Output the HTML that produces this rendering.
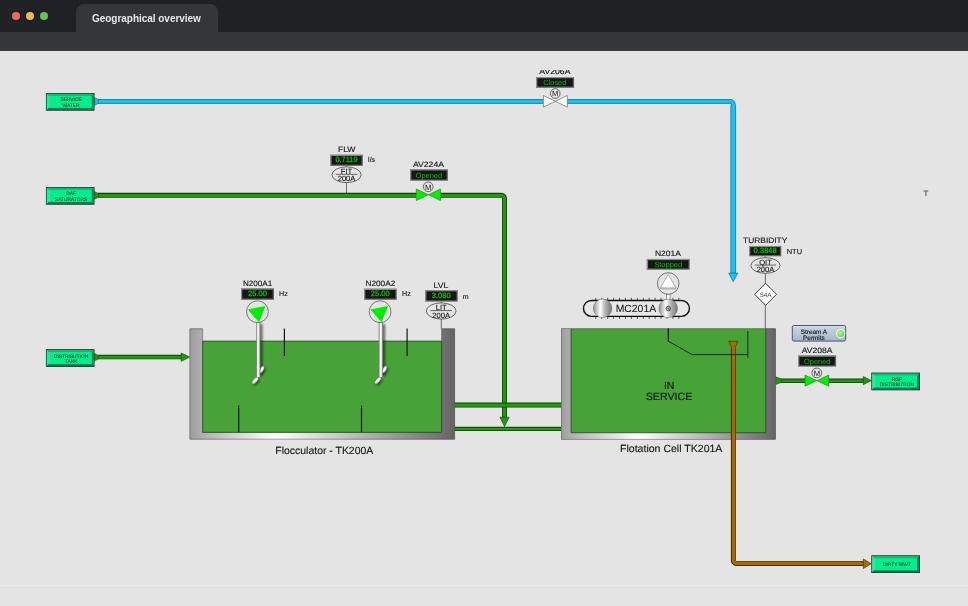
<!DOCTYPE html>
<html>
<head>
<meta charset="utf-8">
<title>Geographical overview</title>
<style>
html,body{margin:0;padding:0;}
body{width:968px;height:606px;overflow:hidden;background:#e4e4e4;font-family:"Liberation Sans",sans-serif;position:relative;}
#titlebar{position:absolute;left:0;top:0;width:968px;height:32px;background:#202124;}
#tab span{will-change:transform;transform:translateZ(0);}
#toolbar{position:absolute;left:0;top:32px;width:968px;height:19px;background:#35363a;}
.dot{position:absolute;top:12px;width:8px;height:8px;border-radius:50%;}
#tab{position:absolute;left:76px;top:4px;width:142px;height:28px;background:#35363a;border-radius:8px 8px 0 0;color:#e6e7e8;font-size:10px;font-weight:bold;line-height:29px;letter-spacing:-0.03px;}
#tab span{position:absolute;left:16px;top:0;}
#stage{position:absolute;left:0;top:70px;width:968px;height:536px;overflow:hidden;will-change:transform;transform:translateZ(0);}
#stage svg{position:absolute;left:0;top:-70px;}
#sep{position:absolute;left:0;top:584.5px;width:968px;height:1px;background:#ecebe6;}
svg text{font-family:"Liberation Sans",sans-serif;text-rendering:geometricPrecision;}
</style>
</head>
<body>
<div id="titlebar">
  <div class="dot" style="left:12px;background:#ed6a5e;"></div>
  <div class="dot" style="left:26px;background:#e5bf4a;"></div>
  <div class="dot" style="left:40px;background:#61c454;"></div>
  <div id="tab"><span>Geographical overview</span></div>
</div>
<div id="toolbar"></div>
<div id="sep"></div>
<div id="stage">
<svg width="968" height="606" viewBox="0 0 968 606">
<defs>
  <linearGradient id="gBot" x1="0" x2="1" y1="0" y2="0">
    <stop offset="0" stop-color="#9e9e9e"/><stop offset="0.05" stop-color="#b0b0b0"/><stop offset="0.32" stop-color="#ffffff"/><stop offset="0.95" stop-color="#727272"/><stop offset="1" stop-color="#646464"/>
  </linearGradient>
  <linearGradient id="gBot2" x1="0" x2="1" y1="0" y2="0">
    <stop offset="0" stop-color="#9e9e9e"/><stop offset="0.05" stop-color="#b0b0b0"/><stop offset="0.36" stop-color="#ffffff"/><stop offset="0.95" stop-color="#727272"/><stop offset="1" stop-color="#646464"/>
  </linearGradient>
  <linearGradient id="gWallL" x1="0" x2="1" y1="0" y2="0">
    <stop offset="0" stop-color="#adadad"/><stop offset="1" stop-color="#a6a6a6"/>
  </linearGradient>
  <linearGradient id="gWallR" x1="0" x2="1" y1="0" y2="0">
    <stop offset="0" stop-color="#727272"/><stop offset="1" stop-color="#656565"/>
  </linearGradient>
  <linearGradient id="gRoll" x1="0" x2="1" y1="0" y2="0">
    <stop offset="0" stop-color="#8e8e8e"/><stop offset="0.12" stop-color="#b4b4b4"/><stop offset="0.38" stop-color="#ffffff"/><stop offset="0.62" stop-color="#b8b8b8"/><stop offset="0.88" stop-color="#8a8a8a"/><stop offset="1" stop-color="#7a7a7a"/>
  </linearGradient>
  <linearGradient id="gShaft" x1="0" x2="1" y1="0" y2="0">
    <stop offset="0" stop-color="#9a9a9a"/><stop offset="0.4" stop-color="#ffffff"/><stop offset="0.65" stop-color="#ececec"/><stop offset="1" stop-color="#8a8a8a"/>
  </linearGradient>
  <linearGradient id="gBlade" x1="0" x2="1" y1="0" y2="1">
    <stop offset="0" stop-color="#ffffff"/><stop offset="0.55" stop-color="#f4f4f4"/><stop offset="1" stop-color="#9a9a9a"/>
  </linearGradient>
  <linearGradient id="gBtn" x1="0" x2="0" y1="0" y2="1">
    <stop offset="0" stop-color="#ccd6e4"/><stop offset="1" stop-color="#a6b6cc"/>
  </linearGradient>
  <radialGradient id="gLed" cx="0.4" cy="0.35" r="0.7">
    <stop offset="0" stop-color="#b4f7a0"/><stop offset="1" stop-color="#4fd63c"/>
  </radialGradient>
  <filter id="shadow" x="-50%" y="-10%" width="250%" height="130%"><feGaussianBlur stdDeviation="0.9"/></filter>
  <g id="term">
    <rect x="0" y="0" width="48.6" height="17.7" fill="#0c3020"/>
    <rect x="0.8" y="0.8" width="47" height="16.1" fill="#12a868"/>
    <path d="M0.8 0.8 H47.8 L45.8 2.8 H2.8 Z" fill="#22b07a"/>
    <path d="M0.8 0.8 V16.9 L2.8 14.9 V2.8 Z" fill="#48d8a0"/>
    <path d="M47.8 0.8 V16.9 L45.8 14.9 V2.8 Z" fill="#10885a"/>
    <path d="M0.8 16.9 H47.8 L45.8 14.9 H2.8 Z" fill="#0c7c52"/>
    <rect x="2.8" y="2.8" width="43" height="12.1" fill="#00ee8c"/>
    <path d="M3.1 2.8 V14.9" stroke="#5ff0b4" stroke-width="0.6"/>
  </g>
</defs>
<g fill="none" stroke-linejoin="round">
<path d="M98 101.45 H730.2 A3 3 0 0 1 733.2 104.45 V274" stroke="#4e3e3c" stroke-width="4.8"/>
<path d="M98 101.45 H730.2 A3 3 0 0 1 733.2 104.45 V274" stroke="#06c8fe" stroke-width="3.7" transform="translate(0,0)"/>
</g>
<g fill="none" stroke-linejoin="round">
<path d="M733.35 106 V274" stroke="#4e3e3c" stroke-width="5.4"/>
<path d="M733.35 106 V274" stroke="#06c8fe" stroke-width="4.4" transform="translate(0,0)"/>
</g>
<path d="M94.6 97.7 L98.4 99.5 L98.4 103.4 L94.6 105.2 Z" fill="#06c8fe" stroke="#4e3e3c" stroke-width="0.5"/>
<path d="M728.7 273.1 H737.8 L733.25 281.8 Z" fill="#06c8fe" stroke="#2a3c46" stroke-width="0.5"/>
<g fill="none" stroke-linejoin="round">
<path d="M98 195.3 H501.5 A3 3 0 0 1 504.5 198.3 V419" stroke="#123f0a" stroke-width="4.9"/>
<path d="M98 195.3 H501.5 A3 3 0 0 1 504.5 198.3 V419" stroke="#22980f" stroke-width="3.2" transform="translate(0,0.2)"/>
</g>
<path d="M94.6 191.6 L98.4 193.5 L98.4 197.3 L94.6 199.2 Z" fill="#22980f" stroke="#123f0a" stroke-width="0.5"/>
<g fill="none" stroke-linejoin="round">
<path d="M98 357.1 H182" stroke="#123f0a" stroke-width="4.5"/>
<path d="M98 357.1 H182" stroke="#22980f" stroke-width="2.9" transform="translate(0,0.15)"/>
</g>
<path d="M94.6 353.4 L98.4 355.3 L98.4 358.9 L94.6 360.8 Z" fill="#22980f" stroke="#123f0a" stroke-width="0.5"/>
<path d="M181.2 352.9 L189.8 357.1 L181.2 361.3 Z" fill="#22980f" stroke="#123f0a" stroke-width="0.6"/>
<g fill="none" stroke-linejoin="round">
<path d="M454.5 404.9 H561.3" stroke="#123f0a" stroke-width="5.0"/>
<path d="M454.5 404.9 H561.3" stroke="#22980f" stroke-width="3.1" transform="translate(0,0.2)"/>
</g>
<g fill="none" stroke-linejoin="round">
<path d="M454.5 428.9 H561.3" stroke="#123f0a" stroke-width="4.3"/>
<path d="M454.5 428.9 H561.3" stroke="#22980f" stroke-width="2.6" transform="translate(0,0.15)"/>
</g>
<path d="M499.9 417.2 H509.2 L504.55 426.6 Z" fill="#22980f" stroke="#123f0a" stroke-width="0.6"/>
<g fill="none" stroke-linejoin="round">
<path d="M780 380.7 H864" stroke="#123f0a" stroke-width="4.4"/>
<path d="M780 380.7 H864" stroke="#22980f" stroke-width="2.8" transform="translate(0,0.15)"/>
</g>
<path d="M775.7 376.8 L781.5 379 L781.5 382.4 L775.7 384.6 Z" fill="#22980f" stroke="#123f0a" stroke-width="0.5"/>
<path d="M863.3 376.5 L871.3 380.6 L863.3 384.7 Z" fill="#22980f" stroke="#123f0a" stroke-width="0.6"/>
<rect x="202.6" y="341.2" width="239" height="91.3" fill="#47a338"/>
<path d="M189.7 328.6 H202.6 V432.5 H441.6 V328.6 H454.8 V439.5 H189.7 Z" fill="url(#gBot)"/>
<path d="M189.9 328.8 H202.6 V341.2 H441.6 V328.8 H454.6 V439.2 H189.9 Z" fill="none" stroke="#4a4a4a" stroke-width="0.5"/>
<path d="M202.6 341.2 V432.4 H441.6 V341.2" fill="none" stroke="#1c3a16" stroke-width="0.8"/>
<path d="M202.6 341.2 H441.6" stroke="#1f4a1a" stroke-width="0.7"/>
<g stroke="#161616" stroke-width="1.2">
  <path d="M284.4 328.6 V355.9"/><path d="M407.1 328.6 V355.9"/>
  <path d="M238.7 405.6 V432.2"/><path d="M361.5 405.6 V432.2"/>
</g>
<text x="324.30" y="453.60" font-size="10.4" text-anchor="middle" fill="#151515" textLength="97.9" lengthAdjust="spacingAndGlyphs" stroke="#151515" stroke-width="0.12">Flocculator - TK200A</text>
<g id="mixer1">
  <rect x="259.4" y="324" width="3" height="52.5" fill="#111" opacity="0.62" filter="url(#shadow)"/>
  <ellipse cx="263.2" cy="370.8" rx="1.8" ry="3.7" transform="rotate(25 263.2 370.8)" fill="#111" opacity="0.6" filter="url(#shadow)"/>
  <ellipse cx="256.5" cy="381.8" rx="1.9" ry="4.1" transform="rotate(40 256.5 381.8)" fill="#111" opacity="0.6" filter="url(#shadow)"/>
  <ellipse cx="261.9" cy="369.6" rx="1.7" ry="3.7" transform="rotate(25 261.9 369.6)" fill="url(#gBlade)" stroke="#777" stroke-width="0.3"/>
  <rect x="256.3" y="322.6" width="3.8" height="54.8" fill="url(#gShaft)" stroke="#6a6a6a" stroke-width="0.4"/>
  <ellipse cx="255.2" cy="380.6" rx="1.8" ry="4.1" transform="rotate(40 255.2 380.6)" fill="url(#gBlade)" stroke="#777" stroke-width="0.3"/>
  <circle cx="257.45" cy="311.7" r="10.9" fill="none" stroke="#4a4a4a" stroke-width="0.7"/>
  <path d="M247.8 309.5 L265.5 305.9 L258.9 322.2 Z" fill="#00ee00"/>
</g>
<use href="#mixer1" x="122.65" y="0"/>
<rect x="571.1" y="328.6" width="194.7" height="104.1" fill="#47a338"/>
<path d="M561.2 328.6 H571.1 V432.7 H765.8 V328.6 H775.7 V439.5 H561.2 Z" fill="url(#gBot2)"/>
<rect x="561.4" y="328.8" width="214.1" height="110.4" fill="none" stroke="#4a4a4a" stroke-width="0.5"/>
<path d="M571.1 328.8 V432.7 H765.8 V328.8" fill="none" stroke="#1c3a16" stroke-width="0.8"/>

<text x="669.20" y="389.00" font-size="10.5" text-anchor="middle" fill="#0a1c08" stroke="#0a1c08" stroke-width="0.15">IN</text>
<text x="669.00" y="399.80" font-size="10.5" text-anchor="middle" fill="#0a1c08" textLength="46.6" lengthAdjust="spacingAndGlyphs" stroke="#0a1c08" stroke-width="0.15">SERVICE</text>
<text x="671.20" y="451.90" font-size="10.4" text-anchor="middle" fill="#151515" textLength="102.4" lengthAdjust="spacingAndGlyphs" stroke="#151515" stroke-width="0.12">Flotation Cell TK201A</text>
<g fill="none" stroke-linejoin="round">
<path d="M733.4 346 V560.4 A3 3 0 0 0 736.4 563.4 H864" stroke="#3e2800" stroke-width="5.0"/>
<path d="M733.4 346 V560.4 A3 3 0 0 0 736.4 563.4 H864" stroke="#a46b04" stroke-width="3.5" transform="translate(0.15,-0.15)"/>
</g>
<path d="M728.5 341.3 H737.9 L735.3 346.2 V348 H731.6 V346.2 Z" fill="#a46b04"/><path d="M731.3 346.6 L728.5 341.3 H737.9 L735.6 346.6" fill="none" stroke="#3e2800" stroke-width="0.6"/>
<path d="M668.3 341.2 L692.1 354.6 H747.9 M747.9 331 V357.8" fill="none" stroke="#101010" stroke-width="0.8"/><path d="M668.3 328.6 V341.5" stroke="#101010" stroke-width="1.2"/>
<path d="M863.3 558.9 L871.2 563.7 L863.3 568.6 Z" fill="#a46b04" stroke="#3e2800" stroke-width="0.6"/>
<use href="#term" x="45.9" y="93"/>
<use href="#term" x="45.9" y="187"/>
<use href="#term" x="45.9" y="349.2"/>
<use href="#term" x="871.3" y="372.6"/>
<use href="#term" x="871.3" y="555.3"/>
<g font-size="4.85" text-anchor="middle" fill="#08502e" stroke="#08502e" stroke-width="0.12">
  <text x="71.1" y="101.4">SERVICE</text><text x="71.1" y="106.7">WATER</text>
  <text x="71.1" y="195.4">DAF</text><text x="71.1" y="200.7">SATURATORS</text>
  <text x="71.1" y="357.6">DISTRIBUTION</text><text x="71.1" y="362.9">TANK</text>
  <text x="896.9" y="380.7">RGF</text><text x="896.9" y="386.4">DISTRIBUTION</text>
  <text x="896.9" y="566.1">DIRTY WWT</text>
</g>
<rect x="543.4" y="98" width="23.9" height="7" fill="#e4e4e4"/>
<text x="554.90" y="73.90" font-size="7.8" text-anchor="middle" fill="#151515" textLength="31.1" lengthAdjust="spacingAndGlyphs" stroke="#151515" stroke-width="0.12">AV206A</text>
<g>
<rect x="536.10" y="77.00" width="38.00" height="10.80" fill="#626262"/>
<path d="M536.10 87.80 V77.00 H574.10 L572.80 78.30 H537.40 V86.50 Z" fill="#8c8c8c"/>
<rect x="537.40" y="78.30" width="35.40" height="8.20" fill="#161616"/>
<text x="554.80" y="84.90" font-size="7.6" text-anchor="middle" fill="#00c000" textLength="23.1" lengthAdjust="spacingAndGlyphs">Closed</text>
</g>
<circle cx="555.20" cy="93.50" r="4.85" fill="#e4e4e4" stroke="#333" stroke-width="0.7"/>
<text x="555.20" y="96.20" font-size="7.6" text-anchor="middle" fill="#151515">M</text>
<path d="M543.40 95.50 L555.35 101.30 L543.40 107.10 Z M567.30 95.50 L555.35 101.30 L567.30 107.10 Z" fill="#ffffff" stroke="#555" stroke-width="0.6" stroke-linejoin="miter"/>
<rect x="416.4" y="192" width="24" height="7" fill="#e4e4e4"/>
<text x="428.45" y="166.60" font-size="7.8" text-anchor="middle" fill="#151515" textLength="31.1" lengthAdjust="spacingAndGlyphs" stroke="#151515" stroke-width="0.12">AV224A</text>
<g>
<rect x="410.10" y="169.30" width="37.80" height="11.40" fill="#626262"/>
<path d="M410.10 180.70 V169.30 H447.90 L446.60 170.60 H411.40 V179.40 Z" fill="#8c8c8c"/>
<rect x="411.40" y="170.60" width="35.20" height="8.80" fill="#161616"/>
<text x="428.90" y="177.50" font-size="7.5" text-anchor="middle" fill="#00c000" textLength="26.4" lengthAdjust="spacingAndGlyphs">Opened</text>
</g>
<circle cx="428.20" cy="186.80" r="4.85" fill="#e4e4e4" stroke="#333" stroke-width="0.7"/>
<text x="428.20" y="189.50" font-size="7.6" text-anchor="middle" fill="#151515">M</text>
<path d="M416.30 189.00 L428.40 194.80 L416.30 200.60 Z M440.50 189.00 L428.40 194.80 L440.50 200.60 Z" fill="#00f000" stroke="#1c7a1c" stroke-width="0.6" stroke-linejoin="miter"/>
<rect x="805.1" y="377.5" width="23.6" height="6.5" fill="#e4e4e4"/>
<text x="817.10" y="353.10" font-size="7.8" text-anchor="middle" fill="#151515" textLength="30.8" lengthAdjust="spacingAndGlyphs" stroke="#151515" stroke-width="0.12">AV208A</text>
<g>
<rect x="798.10" y="355.50" width="38.00" height="11.10" fill="#626262"/>
<path d="M798.10 366.60 V355.50 H836.10 L834.80 356.80 H799.40 V365.30 Z" fill="#8c8c8c"/>
<rect x="799.40" y="356.80" width="35.40" height="8.50" fill="#161616"/>
<text x="817.20" y="363.55" font-size="7.5" text-anchor="middle" fill="#00c000" textLength="26.4" lengthAdjust="spacingAndGlyphs">Opened</text>
</g>
<circle cx="816.80" cy="372.90" r="4.85" fill="#e4e4e4" stroke="#333" stroke-width="0.7"/>
<text x="816.80" y="375.60" font-size="7.6" text-anchor="middle" fill="#151515">M</text>
<path d="M805.00 375.10 L816.85 380.65 L805.00 386.20 Z M828.70 375.10 L816.85 380.65 L828.70 386.20 Z" fill="#00f000" stroke="#1c7a1c" stroke-width="0.6" stroke-linejoin="miter"/>
<text x="346.70" y="152.10" font-size="7.8" text-anchor="middle" fill="#151515" textLength="17.6" lengthAdjust="spacingAndGlyphs" stroke="#151515" stroke-width="0.12">FLW</text>
<path d="M346.5 165.8 V193" stroke="#333" stroke-width="0.7"/>
<g>
<rect x="330.30" y="154.70" width="32.50" height="11.20" fill="#626262"/>
<path d="M330.30 165.90 V154.70 H362.80 L361.50 156.00 H331.60 V164.60 Z" fill="#8c8c8c"/>
<rect x="331.60" y="156.00" width="29.90" height="8.60" fill="#161616"/>
<text x="346.50" y="162.40" font-size="7.6" text-anchor="middle" fill="#00bc00" textLength="22.1" lengthAdjust="spacingAndGlyphs" stroke="#00bc00" stroke-width="0.3">0.7119</text>
</g>
<text x="368.10" y="162.00" font-size="7.0" text-anchor="start" fill="#151515" stroke="#151515" stroke-width="0.12">l/s</text>
<ellipse cx="346.55" cy="174.75" rx="14.60" ry="7.90" fill="#e4e4e4" stroke="#333" stroke-width="0.7"/>
<path d="M335.85 174.35 H357.25" stroke="#333" stroke-width="0.7"/>
<text x="346.55" y="174.15" font-size="7.6" text-anchor="middle" fill="#151515" stroke="#151515" stroke-width="0.12">FIT</text>
<text x="346.55" y="181.25" font-size="7.6" text-anchor="middle" fill="#151515" stroke="#151515" stroke-width="0.12">200A</text>
<text x="441.00" y="288.00" font-size="7.8" text-anchor="middle" fill="#151515" textLength="14.8" lengthAdjust="spacingAndGlyphs" stroke="#151515" stroke-width="0.12">LVL</text>
<path d="M441.3 301.6 V328.6" stroke="#333" stroke-width="0.7"/>
<g>
<rect x="425.20" y="290.10" width="32.50" height="11.50" fill="#626262"/>
<path d="M425.20 301.60 V290.10 H457.70 L456.40 291.40 H426.50 V300.30 Z" fill="#8c8c8c"/>
<rect x="426.50" y="291.40" width="29.90" height="8.90" fill="#161616"/>
<text x="441.30" y="297.95" font-size="7.6" text-anchor="middle" fill="#00bc00" stroke="#00bc00" stroke-width="0.3">3.080</text>
</g>
<text x="462.80" y="298.50" font-size="7.0" text-anchor="start" fill="#151515" stroke="#151515" stroke-width="0.12">m</text>
<ellipse cx="441.20" cy="311.00" rx="14.90" ry="8.10" fill="#e4e4e4" stroke="#333" stroke-width="0.7"/>
<path d="M430.50 310.60 H451.90" stroke="#333" stroke-width="0.7"/>
<text x="441.20" y="310.40" font-size="7.6" text-anchor="middle" fill="#151515" stroke="#151515" stroke-width="0.12">LIT</text>
<text x="441.20" y="317.50" font-size="7.6" text-anchor="middle" fill="#151515" stroke="#151515" stroke-width="0.12">200A</text>
<text x="257.55" y="285.90" font-size="7.8" text-anchor="middle" fill="#151515" textLength="29.3" lengthAdjust="spacingAndGlyphs" stroke="#151515" stroke-width="0.12">N200A1</text>
<g>
<rect x="241.00" y="288.40" width="33.00" height="11.40" fill="#626262"/>
<path d="M241.00 299.80 V288.40 H274.00 L272.70 289.70 H242.30 V298.50 Z" fill="#8c8c8c"/>
<rect x="242.30" y="289.70" width="30.40" height="8.80" fill="#161616"/>
<text x="257.50" y="296.20" font-size="7.6" text-anchor="middle" fill="#00bc00" stroke="#00bc00" stroke-width="0.3">25.00</text>
</g>
<text x="279.00" y="296.30" font-size="7.2" text-anchor="start" fill="#151515" stroke="#151515" stroke-width="0.12">Hz</text>
<text x="380.40" y="285.80" font-size="7.8" text-anchor="middle" fill="#151515" textLength="30.0" lengthAdjust="spacingAndGlyphs" stroke="#151515" stroke-width="0.12">N200A2</text>
<g>
<rect x="364.10" y="288.70" width="32.60" height="11.10" fill="#626262"/>
<path d="M364.10 299.80 V288.70 H396.70 L395.40 290.00 H365.40 V298.50 Z" fill="#8c8c8c"/>
<rect x="365.40" y="290.00" width="30.00" height="8.50" fill="#161616"/>
<text x="380.30" y="296.35" font-size="7.6" text-anchor="middle" fill="#00bc00" stroke="#00bc00" stroke-width="0.3">25.00</text>
</g>
<text x="402.10" y="296.30" font-size="7.2" text-anchor="start" fill="#151515" stroke="#151515" stroke-width="0.12">Hz</text>
<text x="667.85" y="256.00" font-size="7.8" text-anchor="middle" fill="#151515" textLength="25.9" lengthAdjust="spacingAndGlyphs" stroke="#151515" stroke-width="0.12">N201A</text>
<g>
<rect x="646.80" y="258.90" width="42.90" height="10.80" fill="#626262"/>
<path d="M646.80 269.70 V258.90 H689.70 L688.40 260.20 H648.10 V268.40 Z" fill="#8c8c8c"/>
<rect x="648.10" y="260.20" width="40.30" height="8.20" fill="#161616"/>
<text x="668.20" y="266.80" font-size="7.5" text-anchor="middle" fill="#00c000">Stopped</text>
</g>
<circle cx="668.2" cy="283.5" r="10.8" fill="#e4e4e4" stroke="#444" stroke-width="0.7"/>
<path d="M659.8 288.8 H676.6" stroke="#c6c6c6" stroke-width="1.8"/>
<path d="M668.2 274.4 L676 287.9 H660.4 Z" fill="#ffffff" stroke="#6a6a6a" stroke-width="0.5" stroke-linejoin="round"/>
<rect x="666.3" y="294.3" width="3.7" height="5.3" fill="#ffffff" stroke="#5a5a5a" stroke-width="0.6"/>
<rect x="583.5" y="300.45" width="105.9" height="15.95" rx="7.97" ry="7.97" fill="#e7e7e7" stroke="#0c0c0c" stroke-width="1.4"/>
<path d="M595.80 297.9 V299.9 M601.73 297.9 V299.9 M607.66 297.9 V299.9 M613.59 297.9 V299.9 M619.52 297.9 V299.9 M625.45 297.9 V299.9 M631.38 297.9 V299.9 M637.31 297.9 V299.9 M643.24 297.9 V299.9 M649.17 297.9 V299.9 M655.10 297.9 V299.9 M661.03 297.9 V299.9 M672.89 297.9 V299.9 M678.82 297.9 V299.9 M595.80 317 V318.8 M601.73 317 V318.8 M607.66 317 V318.8 M613.59 317 V318.8 M619.52 317 V318.8 M625.45 317 V318.8 M631.38 317 V318.8 M637.31 317 V318.8 M643.24 317 V318.8 M649.17 317 V318.8 M655.10 317 V318.8 M661.03 317 V318.8 M666.96 317 V318.8 M672.89 317 V318.8 M678.82 317 V318.8" stroke="#2a2a2a" stroke-width="0.8"/>
<circle cx="602.6" cy="308.3" r="9.3" fill="url(#gRoll)" stroke="#6a6a6a" stroke-width="0.5"/>
<circle cx="668.2" cy="308.4" r="9.3" fill="url(#gRoll)" stroke="#6a6a6a" stroke-width="0.5"/>
<circle cx="668.2" cy="308.6" r="2.2" fill="none" stroke="#333" stroke-width="0.9"/>
<path d="M666.5 307.7 L669.9 309.5" stroke="#333" stroke-width="0.9"/>
<text x="635.90" y="312.00" font-size="10.4" text-anchor="middle" fill="#151515" textLength="40.5" lengthAdjust="spacingAndGlyphs" stroke="#151515" stroke-width="0.05">MC201A</text>
<text x="765.20" y="243.10" font-size="7.8" text-anchor="middle" fill="#151515" textLength="44.2" lengthAdjust="spacingAndGlyphs" stroke="#151515" stroke-width="0.12">TURBIDITY</text>
<path d="M765.3 256.3 V328.6" stroke="#333" stroke-width="0.7"/>
<g>
<rect x="749.00" y="245.90" width="32.30" height="10.40" fill="#626262"/>
<path d="M749.00 256.30 V245.90 H781.30 L780.00 247.20 H750.30 V255.00 Z" fill="#8c8c8c"/>
<rect x="750.30" y="247.20" width="29.70" height="7.80" fill="#161616"/>
<text x="765.20" y="253.20" font-size="7.6" text-anchor="middle" fill="#00bc00" stroke="#00bc00" stroke-width="0.3">0.3848</text>
</g>
<text x="786.70" y="253.50" font-size="7.3" text-anchor="start" fill="#151515" textLength="15.4" lengthAdjust="spacingAndGlyphs" stroke="#151515" stroke-width="0.12">NTU</text>
<ellipse cx="765.50" cy="265.50" rx="14.60" ry="7.80" fill="#e4e4e4" stroke="#333" stroke-width="0.7"/>
<path d="M754.80 265.10 H776.20" stroke="#333" stroke-width="0.7"/>
<text x="765.50" y="264.90" font-size="7.6" text-anchor="middle" fill="#151515" stroke="#151515" stroke-width="0.12">QIT</text>
<text x="765.50" y="272.00" font-size="7.6" text-anchor="middle" fill="#151515" stroke="#151515" stroke-width="0.12">200A</text>
<path d="M765.6 283.3 L776.5 294.3 L765.6 305.3 L754.7 294.3 Z" fill="#ffffff" stroke="#111" stroke-width="0.8"/>
<text x="765.60" y="296.60" font-size="6.3" text-anchor="middle" fill="#444">S4A</text>
<rect x="792.3" y="325.5" width="53.4" height="15.6" rx="1.8" ry="1.8" fill="url(#gBtn)" stroke="#3c4859" stroke-width="0.9"/>
<path d="M793.6 326.6 H844.4" stroke="#dde5f0" stroke-width="0.7"/>
<text x="813.90" y="333.90" font-size="6.4" text-anchor="middle" fill="#111" stroke="#111" stroke-width="0.12">Stream A</text>
<text x="813.90" y="339.50" font-size="6.4" text-anchor="middle" fill="#111" stroke="#111" stroke-width="0.12">Permits</text>
<circle cx="840.7" cy="333.6" r="4.6" fill="#f2f8f0"/><circle cx="840.7" cy="333.6" r="3.5" fill="url(#gLed)"/>
<text x="925.80" y="196.10" font-size="7.9" text-anchor="middle" fill="#666" font-weight="bold">T</text>
</svg>
</div>
</body>
</html>
